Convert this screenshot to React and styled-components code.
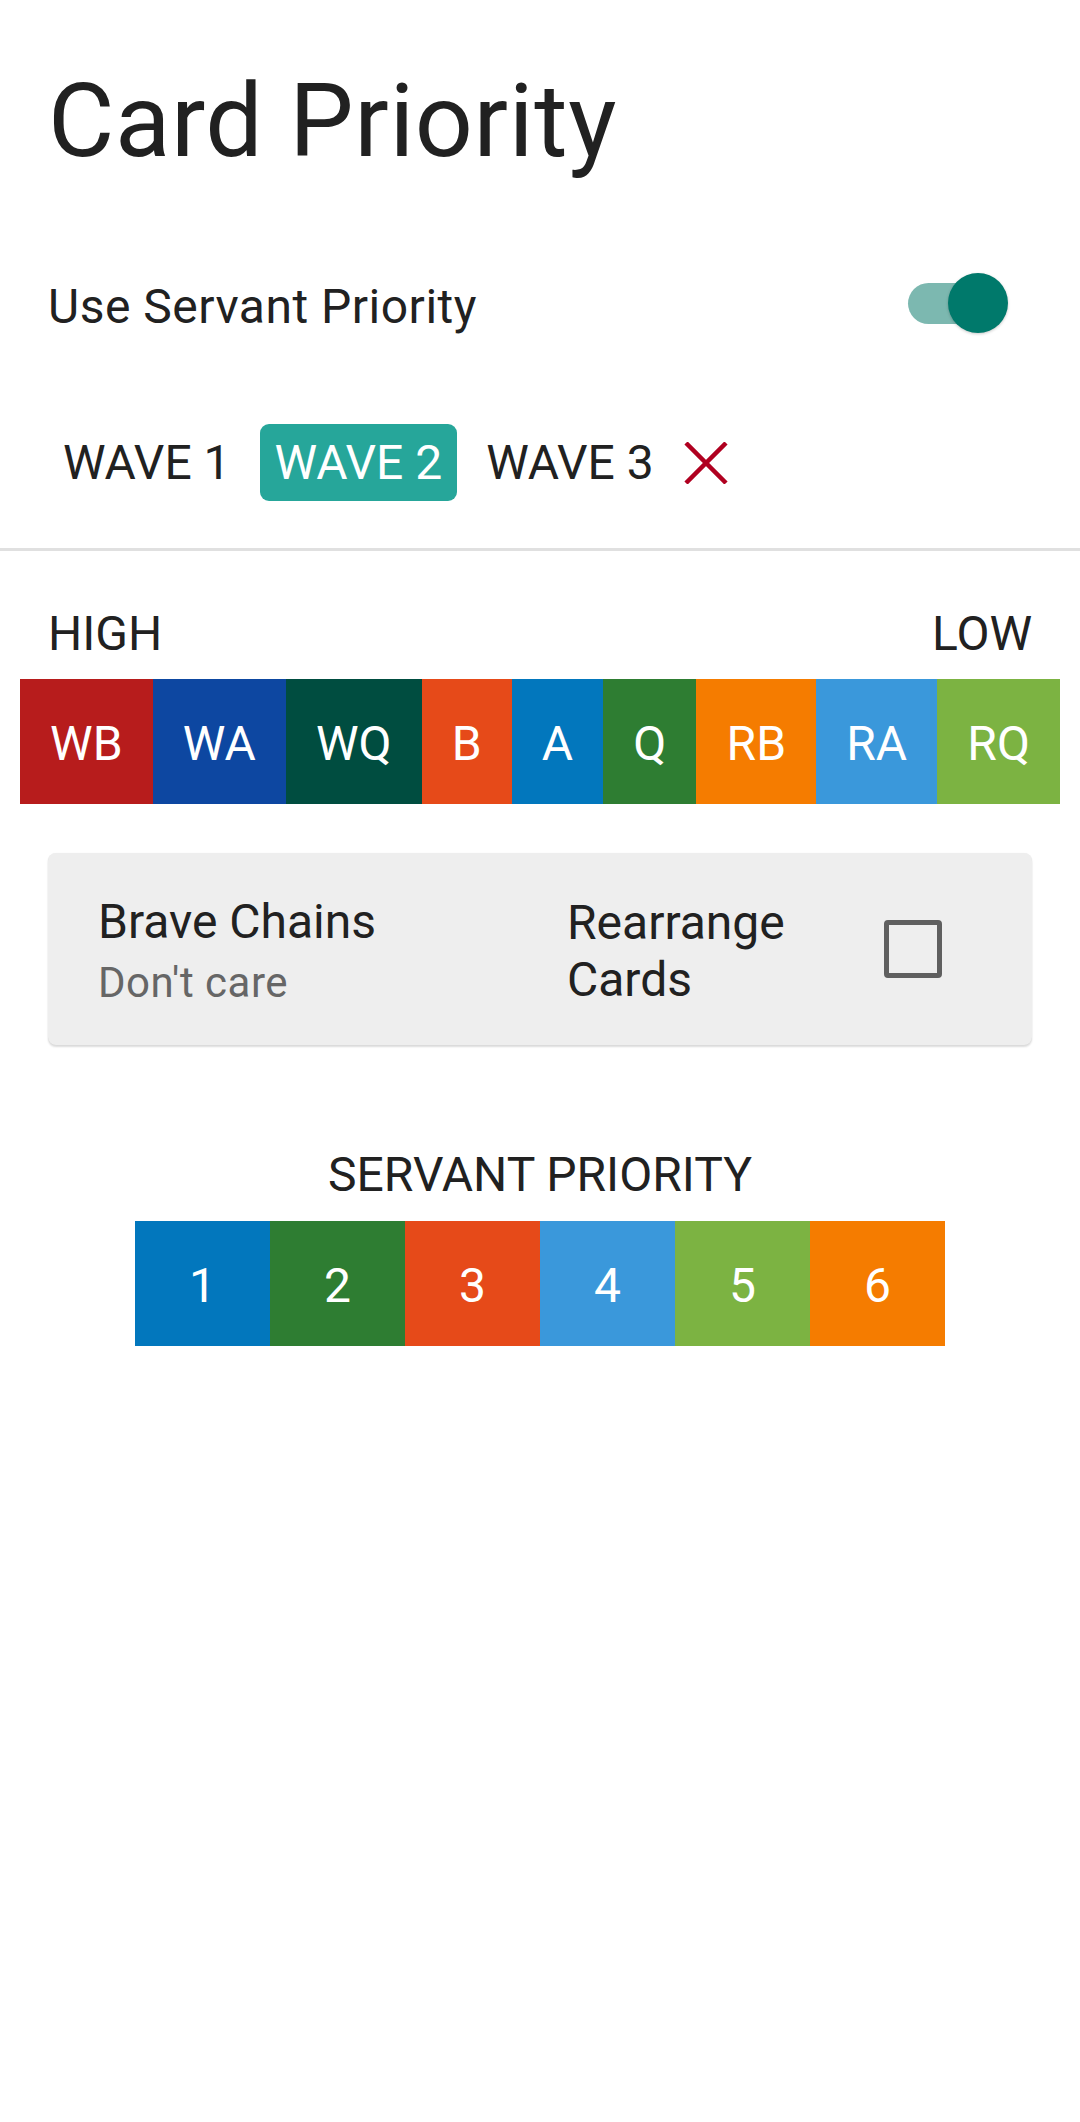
import React from 'react';
import styled, { createGlobalStyle } from 'styled-components';

const GlobalStyle = createGlobalStyle`
  html, body {
    margin: 0;
    padding: 0;
    background: #ffffff;
  }

  body {
    font-family: Roboto, "Noto Sans", "Liberation Sans", sans-serif;
    color: #212121;
    -webkit-font-smoothing: antialiased;
  }
`;

const Page = styled.div`
  width: 1080px;
  min-height: 2122px;
  padding-top: 61px;
  box-sizing: border-box;
  background: #ffffff;
`;

const Title = styled.h1`
  margin: 0 48px;
  font-size: 102px;
  font-weight: 400;
  line-height: 120px;
  letter-spacing: 0.6px;
  color: #212121;
`;

const SettingRow = styled.div`
  display: flex;
  justify-content: space-between;
  align-items: center;
  height: 62px;
  margin: 92px 72px 0 48px;
`;

const SettingLabel = styled.span`
  padding-top: 5px;
  font-size: 48px;
  line-height: 56px;
  letter-spacing: 0.5px;
`;

const Switch = styled.div`
  position: relative;
  width: 100px;
  height: 62px;
`;

const SwitchTrack = styled.div`
  position: absolute;
  left: 0;
  top: 10px;
  width: 96px;
  height: 41px;
  border-radius: 21px;
  background: ${p => (p.on ? '#7cb8b0' : '#bdbdbd')};
`;

const SwitchThumb = styled.div`
  position: absolute;
  top: 0;
  ${p => (p.on ? 'right: 0;' : 'left: 0;')}
  width: 60px;
  height: 60px;
  border-radius: 50%;
  background: ${p => (p.on ? '#00796b' : '#fafafa')};
  box-shadow: 0 1px 3px rgba(0, 0, 0, 0.22);
`;

const WaveTabs = styled.div`
  display: flex;
  align-items: center;
  gap: 14px;
  height: 77px;
  margin-top: 89px;
  padding-left: 48px;
`;

const WaveTab = styled.div`
  display: flex;
  align-items: center;
  height: 77px;
  padding: 0 15px;
  border-radius: 9px;
  font-size: 48px;
  line-height: 56px;
  background: ${p => (p.active ? '#26a69a' : 'transparent')};
  color: ${p => (p.active ? '#ffffff' : '#212121')};
`;

const RemoveButton = styled.div`
  display: flex;
  align-items: center;
  justify-content: center;
  width: 46px;
  height: 46px;
  margin-left: 0;

  svg {
    display: block;
  }
`;

const Divider = styled.div`
  height: 3px;
  margin-top: 47px;
  background: #e0e0e0;
`;

const PriorityLabels = styled.div`
  display: flex;
  justify-content: space-between;
  margin: 55px 48px 0 48px;
  font-size: 48px;
  line-height: 56px;
`;

const CardBar = styled.div`
  display: flex;
  height: 125px;
  margin: 17px 20px 0;
`;

const CardChip = styled.div`
  flex: 1 1 auto;
  display: flex;
  align-items: center;
  justify-content: center;
  padding-top: 3px;
  background: ${p => p.color};
  color: #ffffff;
  font-size: 48px;
`;

const OptionsCard = styled.div`
  display: grid;
  grid-template-columns: 469px 1fr 58px;
  align-items: start;
  margin: 49px 48px 0;
  padding: 41px 90px 35px 50px;
  background: #eeeeee;
  border-radius: 8px;
  box-shadow: 0 2px 2px rgba(0, 0, 0, 0.14), 0 0 1px rgba(0, 0, 0, 0.08);
`;

const OptionColumn = styled.div`
  display: flex;
  flex-direction: column;
`;

const OptionTitle = styled.div`
  font-size: 48px;
  line-height: ${p => (p.tall ? '57px' : '56px')};
  color: #212121;
`;

const OptionValue = styled.div`
  margin-top: 6px;
  font-size: 42px;
  line-height: 54px;
  letter-spacing: 0.5px;
  color: #666666;
`;

const Checkbox = styled.div`
  align-self: center;
  margin-top: -7px;
  width: 58px;
  height: 58px;
  box-sizing: border-box;
  border: 5px solid #5f5f5f;
  border-radius: 4px;
  background: ${p => (p.checked ? '#00796b' : 'transparent')};
`;

const ServantSection = styled.div`
  margin-top: 102px;
  display: flex;
  flex-direction: column;
  align-items: center;
`;

const SectionHeading = styled.div`
  font-size: 48px;
  line-height: 56px;
`;

const ServantBar = styled.div`
  display: grid;
  grid-template-columns: repeat(6, 135px);
  height: 125px;
  margin-top: 18px;
`;

const ServantChip = styled.div`
  display: flex;
  align-items: center;
  justify-content: center;
  padding-top: 3px;
  background: ${p => p.color};
  color: #ffffff;
  font-size: 48px;
`;

const cards = [
  { label: 'WB', color: '#b71c1c' },
  { label: 'WA', color: '#0d47a1' },
  { label: 'WQ', color: '#004d40' },
  { label: 'B', color: '#e64a19' },
  { label: 'A', color: '#0277bd' },
  { label: 'Q', color: '#2e7d32' },
  { label: 'RB', color: '#f57c00' },
  { label: 'RA', color: '#3a98db' },
  { label: 'RQ', color: '#7cb342' },
];

const servants = [
  { label: '1', color: '#0277bd' },
  { label: '2', color: '#2e7d32' },
  { label: '3', color: '#e64a19' },
  { label: '4', color: '#3a98db' },
  { label: '5', color: '#7cb342' },
  { label: '6', color: '#f57c00' },
];

const waves = ['WAVE 1', 'WAVE 2', 'WAVE 3'];

const App = () => {
  const selectedWave = 1;

  return (
    <Page>
      <GlobalStyle />
      <Title>Card Priority</Title>

      <SettingRow>
        <SettingLabel>Use Servant Priority</SettingLabel>
        <Switch>
          <SwitchTrack on />
          <SwitchThumb on />
        </Switch>
      </SettingRow>

      <WaveTabs>
        {waves.map((wave, i) => (
          <WaveTab key={wave} active={i === selectedWave}>
            {wave}
          </WaveTab>
        ))}
        <RemoveButton>
          <svg width="44" height="42" viewBox="0 0 44 42">
            <path d="M2 1 L42 41 M42 1 L2 41" stroke="#b00020" strokeWidth="4.5" fill="none" />
          </svg>
        </RemoveButton>
      </WaveTabs>

      <Divider />

      <PriorityLabels>
        <span>HIGH</span>
        <span>LOW</span>
      </PriorityLabels>

      <CardBar>
        {cards.map(card => (
          <CardChip key={card.label} color={card.color}>
            {card.label}
          </CardChip>
        ))}
      </CardBar>

      <OptionsCard>
        <OptionColumn>
          <OptionTitle>Brave Chains</OptionTitle>
          <OptionValue>Don't care</OptionValue>
        </OptionColumn>
        <OptionColumn>
          <OptionTitle tall>Rearrange Cards</OptionTitle>
        </OptionColumn>
        <Checkbox />
      </OptionsCard>

      <ServantSection>
        <SectionHeading>SERVANT PRIORITY</SectionHeading>
        <ServantBar>
          {servants.map(s => (
            <ServantChip key={s.label} color={s.color}>
              {s.label}
            </ServantChip>
          ))}
        </ServantBar>
      </ServantSection>
    </Page>
  );
};

export default App;
